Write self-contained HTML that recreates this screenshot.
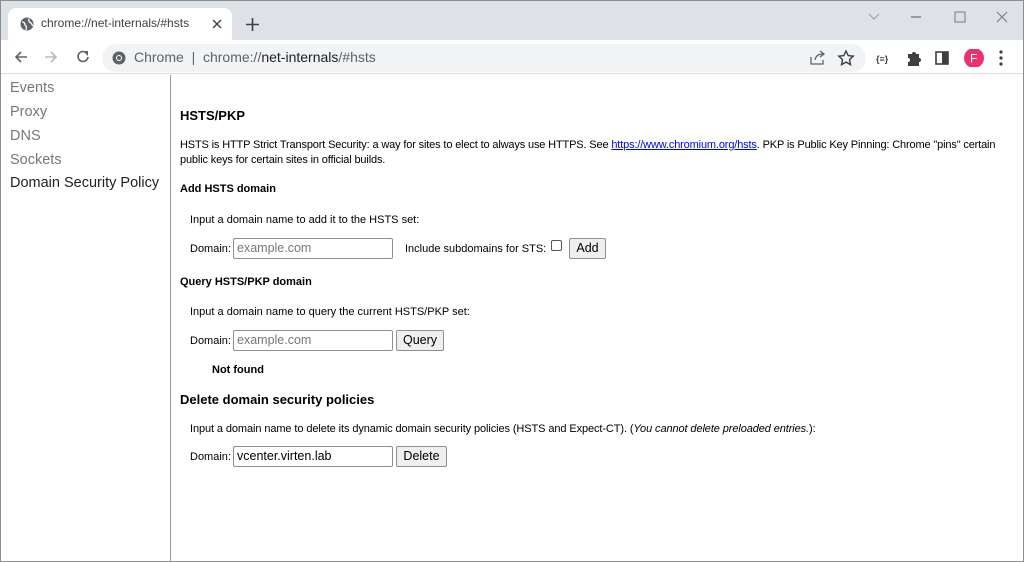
<!DOCTYPE html>
<html><head><style>
*{margin:0;padding:0;box-sizing:border-box}
body{width:1024px;height:562px;overflow:hidden;background:#fff;font-family:"Liberation Sans",sans-serif;position:relative}
.frame{position:absolute;inset:0;border:1px solid #8a8f96;pointer-events:none;z-index:9}
.tabstrip{position:absolute;left:0;top:0;width:1024px;height:40px;background:#dee1e6}
.tab{position:absolute;left:8px;top:8px;width:224px;height:32px;background:#fff;border-radius:8px 8px 0 0}
.toolbar{position:absolute;left:0;top:40px;width:1024px;height:34px;background:#fff;border-bottom:1px solid #dadce0}
.omni{position:absolute;left:102px;top:44px;width:764px;height:28px;background:#f1f3f4;border-radius:14px}
.t{position:absolute;white-space:nowrap}
.side{position:absolute;left:0;top:75px;width:171px;height:487px;border-right:1px solid #999}
.side div{position:absolute;left:10px;font-size:14.5px;color:#777}
.inp{position:absolute;height:21px;border:1px solid #8f8f8f;border-radius:2px;background:#fff;font-size:12.5px;padding:2px 3px;color:#777}
.btn{position:absolute;height:21px;border:1px solid #8f8f8f;border-radius:2px;background:#efefef;font-size:12.5px;text-align:center;line-height:19px}
</style></head><body>
<div class="tabstrip"></div>
<div class="tab"></div>
<svg class="t" style="left:20px;top:17px" width="14" height="14" viewBox="0 0 14 14"><circle cx="7" cy="7" r="6.5" fill="#5f6368"/><path d="M2 5 Q5 5 5 8 Q7 9 6 13 M9 1.5 Q8 5 11 6 Q12.5 8 12.5 9" stroke="#fff" stroke-width="1.3" fill="none"/></svg>
<div class="t" style="left:41px;top:16px;font-size:12px;color:#3c4043">chrome://net-internals/#hsts</div>
<svg class="t" style="left:212px;top:19px" width="10" height="10" viewBox="0 0 10 10"><path d="M1 1l8 8M9 1l-8 8" stroke="#3c4043" stroke-width="1.4"/></svg>
<svg class="t" style="left:246px;top:18px" width="13" height="13" viewBox="0 0 13 13"><path d="M6.5 0v13M0 6.5h13" stroke="#3c4043" stroke-width="1.6"/></svg>
<svg class="t" style="left:866px;top:10px" width="150" height="14" viewBox="0 0 150 14"><path d="M3 4l5 5 5-5" stroke="#999" fill="none"/><path d="M45 7h10" stroke="#555"/><rect x="89" y="2" width="10" height="10" stroke="#777" fill="none"/><path d="M131 2l10 10M141 2l-10 10" stroke="#777"/></svg>
<div class="toolbar"></div>
<svg class="t" style="left:14px;top:50px" width="84" height="14" viewBox="0 0 84 14"><path d="M13 7H2M7 2L2 7l5 5" stroke="#5f6368" stroke-width="1.6" fill="none"/><path d="M31 7h11M37 2l5 5-5 5" stroke="#bbb" stroke-width="1.6" fill="none"/><path d="M72 2.5A5 5 0 1 0 74 7" stroke="#5f6368" stroke-width="1.6" fill="none"/><path d="M69 1h5v5z" fill="#5f6368"/></svg>
<div class="omni"></div>
<svg class="t" style="left:112px;top:51px" width="14" height="14" viewBox="0 0 14 14"><circle cx="7" cy="7" r="6.5" fill="#5f6368"/><circle cx="7" cy="7" r="3" fill="#fff"/><circle cx="7" cy="7" r="2" fill="#5f6368"/></svg>
<div class="t" style="left:134px;top:49px;font-size:14px;color:#5f6368">Chrome&nbsp;&nbsp;|&nbsp;&nbsp;chrome://<span style="color:#202124">net-internals</span>/#hsts</div>
<svg class="t" style="left:808px;top:49px" width="200" height="18" viewBox="0 0 200 18"><path d="M3 8v7h12v-4M7 11q1-6 8-6M12 2l4 3-4 3" stroke="#5f6368" stroke-width="1.3" fill="none"/><path d="M38 2l2.2 4.6 5 .6-3.7 3.4 1 5-4.5-2.5-4.5 2.5 1-5-3.7-3.4 5-.6z" stroke="#3c4043" stroke-width="1.4" fill="none"/><text x="68" y="13" font-size="9" font-family="Liberation Sans" font-weight="bold" fill="#3c4043">{≡}</text><path d="M100 5h4a2 2 0 0 1 4 0h3v4a2 2 0 0 1 0 4v4h-11v-4a2 2 0 0 0 0-4z" fill="#3c4043"/><rect x="128" y="3" width="12" height="12" stroke="#3c4043" stroke-width="1.6" fill="none"/><rect x="134" y="3" width="6" height="12" fill="#3c4043"/><circle cx="166" cy="9" r="10" fill="#e8336e"/><text x="162" y="13.5" font-size="12" font-family="Liberation Sans" fill="#fff">F</text><circle cx="193" cy="3" r="1.6" fill="#3c4043"/><circle cx="193" cy="9" r="1.6" fill="#3c4043"/><circle cx="193" cy="15" r="1.6" fill="#3c4043"/></svg>
<div class="side">
<div style="top:5px">Events</div>
<div style="top:29px">Proxy</div>
<div style="top:53px">DNS</div>
<div style="top:77px">Sockets</div>
<div style="top:100px;color:#222">Domain Security Policy</div>
</div>
<div class="t" style="left:180px;top:108px;font-size:13px;font-weight:bold">HSTS/PKP</div>
<div class="t" style="left:180px;top:138px;font-size:11px;line-height:14.5px;letter-spacing:-0.15px">HSTS is HTTP Strict Transport Security: a way for sites to elect to always use HTTPS. See <span style="color:#00e;text-decoration:underline">https://www.chromium.org/hsts</span>. PKP is Public Key Pinning: Chrome "pins" certain<br>public keys for certain sites in official builds.</div>
<div class="t" style="left:180px;top:183px;font-size:11px;font-weight:bold">Add HSTS domain</div>
<div class="t" style="left:190px;top:214px;font-size:11px">Input a domain name to add it to the HSTS set:</div>
<div class="t" style="left:190px;top:243px;font-size:11px">Domain:</div>
<div class="inp" style="left:233px;top:238px;width:160px">example.com</div>
<div class="t" style="left:405px;top:243px;font-size:11px">Include subdomains for STS:</div>
<div class="t" style="left:551px;top:240px;width:11px;height:11px;border:1px solid #555;border-radius:2px"></div>
<div class="btn" style="left:569px;top:238px;width:37px">Add</div>
<div class="t" style="left:180px;top:276px;font-size:11px;font-weight:bold">Query HSTS/PKP domain</div>
<div class="t" style="left:190px;top:306px;font-size:11px">Input a domain name to query the current HSTS/PKP set:</div>
<div class="t" style="left:190px;top:335px;font-size:11px">Domain:</div>
<div class="inp" style="left:233px;top:330px;width:160px">example.com</div>
<div class="btn" style="left:396px;top:330px;width:48px">Query</div>
<div class="t" style="left:212px;top:364px;font-size:11px;font-weight:bold">Not found</div>
<div class="t" style="left:180px;top:392px;font-size:13px;font-weight:bold">Delete domain security policies</div>
<div class="t" style="left:190px;top:423px;font-size:11px;letter-spacing:-0.1px">Input a domain name to delete its dynamic domain security policies (HSTS and Expect-CT). (<i>You cannot delete preloaded entries.</i>):</div>
<div class="t" style="left:190px;top:451px;font-size:11px">Domain:</div>
<div class="inp" style="left:233px;top:446px;width:160px;color:#000">vcenter.virten.lab</div>
<div class="btn" style="left:396px;top:446px;width:51px">Delete</div>
<div class="frame"></div>
</body></html>
